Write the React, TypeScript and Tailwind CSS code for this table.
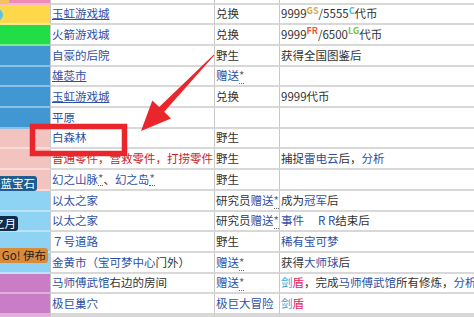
import React from 'react';

const L = 'text-[#2d4fa6]';
const G = 'text-[#333]';

const Star = () => (
  <span className="text-[#666] border-b border-dotted border-[#666] leading-none">*</span>
);

type Row = { h: string; bg: string; c2?: React.ReactNode; c3?: React.ReactNode; c4?: React.ReactNode };

const rows: Row[] = [
  { h: 'h-[5px]', bg: 'bg-[#ef8ab5]' },
  {
    h: 'h-[20px]', bg: 'bg-[#fdd84a]',
    c2: <span className={`${L} underline`}>玉虹游戏城</span>,
    c3: '兑换',
    c4: (
      <>
        9999<sup className="text-[9px] font-bold"><span className="text-[#dba51c]">G</span><span className="text-[#c9b27a]">S</span></sup>/5555<sup className="text-[9px] font-bold text-[#3cc6d6]">C</sup>代币
      </>
    ),
  },
  {
    h: 'h-[21px]', bg: 'bg-[#22de46]',
    c2: <span className={L}>火箭游戏城</span>,
    c3: '兑换',
    c4: (
      <>
        9999<sup className="text-[9px] font-bold text-[#f05a28]">FR</sup>/6500<sup className="text-[9px] font-bold text-[#78c63c]">LG</sup>代币
      </>
    ),
  },
  { h: 'h-[21px]', bg: 'bg-[#4197d1]', c2: <span className={L}>自豪的后院</span>, c3: '野生', c4: '获得全国图鉴后' },
  {
    h: 'h-[20px]', bg: 'bg-[#4197d1]',
    c2: <span className={`${L} underline`}>雄蕊市</span>,
    c3: <><span className={L}>赠送</span><Star /></>,
  },
  { h: 'h-[21px]', bg: 'bg-[#4197d1]', c2: <span className={`${L} underline`}>玉虹游戏城</span>, c3: '兑换', c4: '9999代币' },
  { h: 'h-[21px]', bg: 'bg-[#4197d1]', c2: <span className={L}>平原</span> },
  { h: 'h-[20px]', bg: 'bg-[#f3c3bf]', c2: <span className={L}>白森林</span>, c3: '野生' },
  {
    h: 'h-[21px]', bg: 'bg-[#f3c3bf]',
    c2: <span className="text-[#cc2222]">普通零件，营救零件，打捞零件</span>,
    c3: '野生',
    c4: <>捕捉<span className={L}>雷电云</span>后，<span className={L}>分析</span></>,
  },
  {
    h: 'h-[21px]', bg: 'bg-[#f3c3bf]',
    c2: <><span className={L}>幻之山脉</span><Star />、<span className={L}>幻之岛</span><Star /></>,
    c3: '野生',
  },
  {
    h: 'h-[21px]', bg: 'bg-[#8fd3f4]',
    c2: <span className={L}>以太之家</span>,
    c3: <>研究员<span className={L}>赠送</span><Star /></>,
    c4: <>成为<span className={L}>冠军</span>后</>,
  },
  {
    h: 'h-[20px]', bg: 'bg-[#8fd3f4]',
    c2: <span className={L}>以太之家</span>,
    c3: <>研究员<span className={L}>赠送</span><Star /></>,
    c4: <><span className={L}>事件</span>　 <span className={L}>R R</span>结束后</>,
  },
  { h: 'h-[21px]', bg: 'bg-[#8fd3f4]', c2: <span className={L}>７号道路</span>, c3: '野生', c4: <span className={L}>稀有宝可梦</span> },
  {
    h: 'h-[21px]', bg: 'bg-[#8fd3f4]',
    c2: <><span className={L}>金黄市</span><span className={L}>（宝可梦中心</span>门外）</>,
    c3: <><span className={L}>赠送</span><Star /></>,
    c4: <>获得<span className={L}>大师球</span>后</>,
  },
  {
    h: 'h-[20px]', bg: 'bg-[#c97dc7]',
    c2: <><span className={L}>马师傅武馆</span>右边的房间</>,
    c3: <><span className={L}>赠送</span><Star /></>,
    c4: (
      <>
        <span className="text-[#1ea7dc]">剑</span><span className="text-[#e2245c]">盾</span>，完成<span className={L}>马师傅武馆</span>所有修炼，<span className={L}>分析</span>
      </>
    ),
  },
  {
    h: 'h-[21px]', bg: 'bg-[#c97dc7]',
    c2: <span className={L}>极巨巢穴</span>,
    c3: <span className={L}>极巨大冒险</span>,
    c4: <><span className="text-[#1ea7dc]">剑</span><span className="text-[#e2245c]">盾</span></>,
  },
  { h: 'h-[2px]', bg: 'bg-[#c97dc7]' },
];

const Badge = ({ text, className }: { text: string; className: string }) => (
  <div className={`absolute whitespace-nowrap rounded-[3px] px-[2px] text-[11.5px] leading-[15px] ${className}`}>{text}</div>
);

export default function App() {
  return (
    <div
      className="relative w-[474px] h-[317px] overflow-hidden bg-white text-[11.5px] text-[#333]"
      style={{ fontFamily: '"Noto Sans CJK SC", "Noto Sans", sans-serif' }}
    >
      {rows.map((r, i) => (
        <div key={i} className={`flex ${r.h}`}>
          <div className={`w-[51px] shrink-0 border-r border-r-[#c8c8c8] border-b-2 border-b-white/40 ${r.bg}`} />
          <div className="w-[164px] shrink-0 border-r border-r-[#c8c8c8] border-b-2 border-b-[#d8d8d8] pl-[1px] flex items-center whitespace-nowrap overflow-hidden">
            {r.c2}
          </div>
          <div className="w-[65px] shrink-0 border-r border-r-[#c8c8c8] border-b-2 border-b-[#d8d8d8] pl-[1px] flex items-center whitespace-nowrap overflow-hidden">
            <span className={G}>{r.c3}</span>
          </div>
          <div className="flex-1 border-b-2 border-b-[#d8d8d8] pl-[1px] flex items-center whitespace-nowrap overflow-hidden">
            <span className={G}>{r.c4}</span>
          </div>
        </div>
      ))}

      {/* badges in the left column, cut at the page edge */}
      <div className="absolute left-0 top-0 w-[50px] h-[317px] overflow-hidden pointer-events-none">
        <div className="absolute left-0 top-0 w-[9px] h-[4px] bg-[#f6c35a]" />
        <div className="absolute left-[-9px] top-[9px] w-[12px] h-[12px] rounded-full bg-[#5cc4df]" />
        <Badge text="阿尔法蓝宝石" className="right-[13px] top-[176px] bg-[#1f5c8f] text-white" />
        <Badge text="究极之月" className="right-[32px] top-[216px] bg-[#0f2c4a] text-white" />
        <Badge text="Let's Go! 伊布" className="right-[2px] top-[248px] bg-[#d98b3c] text-[#222]" />
      </div>

      {/* red annotation */}
      <svg className="absolute inset-0 pointer-events-none" width="474" height="317" viewBox="0 0 474 317">
        <rect x="32.5" y="126.5" width="92" height="27" fill="none" stroke="#e8262b" strokeWidth="5.5" />
        <polygon
          points="141,131 152.3,100.4 159.2,107 213.6,54.7 214.4,55.3 164.2,111.8 171,118.4"
          fill="#e8262b"
        />
      </svg>
    </div>
  );
}
